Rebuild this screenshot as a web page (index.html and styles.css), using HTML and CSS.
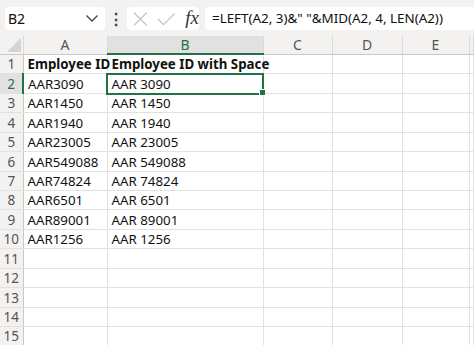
FILE: index.html
```html
<!doctype html>
<html>
	<head>
		<meta charset="utf-8"/>
		<title>Employee ID</title>
		<link rel="stylesheet" href="styles.css">
	</head>
	<body>
		<!-- formula bar -->
		<div class="bar">
			<div class="namebox">
				<span>B2</span>
				<svg width="14" height="9" viewBox="0 0 14 9"><path d="M1.5 1.5 L7 7 L12.5 1.5" fill="none" stroke="#444" stroke-width="1.3"/></svg>
			</div>
			<div class="dots">⋮</div>
			<div class="tools">
				<svg width="18" height="18" viewBox="0 0 18 18"><path d="M2 2 L16 16 M16 2 L2 16" stroke="#c4c4c4" stroke-width="1.3"/></svg>
				<svg width="20" height="18" viewBox="0 0 20 18"><path d="M1 9 L7 15 L19 3" fill="none" stroke="#c4c4c4" stroke-width="1.3"/></svg>
				<span class="fx">fx</span>
			</div>
			<div class="formula">=LEFT(A2, 3)&amp;" "&amp;MID(A2, 4, LEN(A2))</div>
		</div>
		<!-- sheet -->
		<table class="sheet">
			<colgroup>
				<col style="width:23px"><col style="width:84px"><col style="width:156px"><col style="width:69px"><col style="width:70px"><col style="width:67px"><col>
			</colgroup>
			<tr class="head">
				<td class="corner"><svg width="16" height="16" viewBox="0 0 16 16"><path d="M15 1 L15 15 L1 15 Z" fill="#d4d4d4"/></svg></td>
				<td>A</td><td class="sel">B</td><td>C</td><td>D</td><td>E</td><td></td>
			</tr>
			<tr><td class="num">1</td><td class="b">Employee ID</td><td class="b">Employee ID with Space</td><td></td><td></td><td></td><td></td></tr>
			<tr class="r2"><td class="num act">2</td><td>AAR3090</td><td class="cur">AAR 3090<i class="handle"></i></td><td></td><td></td><td></td><td></td></tr>
			<tr><td class="num">3</td><td>AAR1450</td><td>AAR 1450</td><td></td><td></td><td></td><td></td></tr>
			<tr class="r2"><td class="num">4</td><td>AAR1940</td><td>AAR 1940</td><td></td><td></td><td></td><td></td></tr>
			<tr><td class="num">5</td><td>AAR23005</td><td>AAR 23005</td><td></td><td></td><td></td><td></td></tr>
			<tr class="r2"><td class="num">6</td><td>AAR549088</td><td>AAR 549088</td><td></td><td></td><td></td><td></td></tr>
			<tr><td class="num">7</td><td>AAR74824</td><td>AAR 74824</td><td></td><td></td><td></td><td></td></tr>
			<tr><td class="num">8</td><td>AAR6501</td><td>AAR 6501</td><td></td><td></td><td></td><td></td></tr>
			<tr class="r2"><td class="num">9</td><td>AAR89001</td><td>AAR 89001</td><td></td><td></td><td></td><td></td></tr>
			<tr><td class="num">10</td><td>AAR1256</td><td>AAR 1256</td><td></td><td></td><td></td><td></td></tr>
			<tr class="r2"><td class="num">11</td><td></td><td></td><td></td><td></td><td></td><td></td></tr>
			<tr><td class="num">12</td><td></td><td></td><td></td><td></td><td></td><td></td></tr>
			<tr class="r2"><td class="num">13</td><td></td><td></td><td></td><td></td><td></td><td></td></tr>
			<tr><td class="num">14</td><td></td><td></td><td></td><td></td><td></td><td></td></tr>
			<tr><td class="num">15</td><td></td><td></td><td></td><td></td><td></td><td></td></tr>
		</table>
	</body>
</html>
```

FILE: styles.css
```css
html, body {
	margin: 0;
	background: #fff;
	overflow: hidden;
}
body {
	width: 474px;
	height: 345px;
	font-family: "Noto Sans", "Open Sans", sans-serif;
	color: #111;
}
/* formula bar */
.bar {
	height: 36px;
	background: #f3f2f1;
	display: flex;
	align-items: center;
	padding-left: 5px;
	box-sizing: border-box;
	padding-top: 1px;
}
.namebox {
	width: 100px;
	height: 23px;
	background: #fff;
	border-radius: 4px;
	display: flex;
	align-items: center;
	justify-content: space-between;
	padding: 0 6px 0 3px;
	box-sizing: border-box;
	font-size: 14px;
}
.dots {
	width: 22px;
	text-align: center;
	font-size: 16px;
	font-weight: bold;
	color: #444;
}
.tools {
	width: 72px;
	height: 23px;
	background: #fff;
	border-radius: 4px;
	display: flex;
	align-items: center;
	gap: 8px;
	padding-left: 5px;
	box-sizing: border-box;
}
.fx {
	font-family: "Liberation Serif", serif;
	font-style: italic;
	font-size: 19px;
	color: #333;
	margin-left: 2px;
	margin-top: -2px;
}
.formula {
	flex: 1;
	height: 23px;
	margin-left: 6px;
	background: #fff;
	border-radius: 4px 0 0 4px;
	font-size: 13.4px;
	line-height: 23px;
	padding-left: 7px;
	white-space: nowrap;
	overflow: hidden;
}
/* grid */
.sheet {
	border-collapse: collapse;
	table-layout: fixed;
	width: 474px;
	font-size: 13.3px;
}
.sheet td {
	padding: 1px 0 0 4px;
	border-right: 1px solid #e2e2e2;
	border-bottom: 1px solid #e2e2e2;
	white-space: nowrap;
	overflow: visible;
	line-height: 17px;
	box-sizing: border-box;
}
.sheet tr td {
	height: 19px;
}
.sheet tr.r2 td {
	height: 20px;
}
.sheet tr.head td {
	height: 18px;
	background: #f3f2f1;
	text-align: center;
	color: #555;
	border-bottom: 1px solid #c9c9c9;
	border-right: 1px solid #dadada;
	font-size: 14px;
	padding: 0;
}
.sheet tr.head td.sel {
	background: #e1e1e1;
	color: #217346;
	border-bottom: 2px solid #217346;
}
.corner {
	position: relative;
}
.corner svg {
	position: absolute;
	right: 1px;
	bottom: 1px;
}
.num {
	background: #f3f2f1;
	color: #555;
	text-align: center;
	font-size: 13.5px;
	padding: 1px 0 0 0 !important;
	border-right: 1px solid #c9c9c9 !important;
}
.num.act {
	background: #e1e1e1;
	color: #217346;
	border-right: 2px solid #217346 !important;
}
.b {
	font-weight: bold;
}
.cur {
	position: relative;
	outline: 2px solid #217346;
	outline-offset: -1px;
}
.handle {
	position: absolute;
	right: -3px;
	bottom: -3px;
	width: 5px;
	height: 5px;
	background: #217346;
	border: 1px solid #fff;
}
```
